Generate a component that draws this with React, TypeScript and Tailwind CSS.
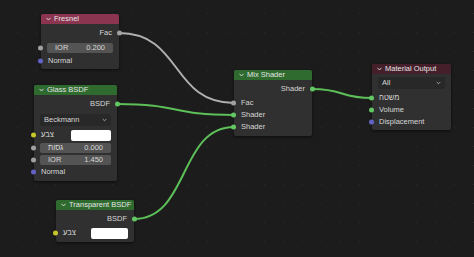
import { ReactNode } from "react";

type Side = "in" | "out";

const socketColor: Record<string, string> = {
  grey: "bg-[#a1a1a1]",
  green: "bg-[#63c763]",
  purple: "bg-[#6363c7]",
  yellow: "bg-[#c7c729]",
};

const Socket = ({ side, color }: { side: Side; color: string }) => (
  <span
    className={`absolute top-1/2 -translate-y-1/2 w-[5px] h-[5px] rounded-full ${socketColor[color]} ${
      side === "in" ? "-left-[3px]" : "-right-[3px]"
    }`}
  />
);

type NodeProps = {
  title: string;
  header: string;
  x: number;
  y: number;
  w: number;
  children: ReactNode;
};

// node boxes sit on a free canvas, so position comes from data
const Node = ({ title, header, x, y, w, children }: NodeProps) => (
  <div
    className="absolute bg-[#303030] rounded-[2px] shadow-[0_1px_3px_rgba(0,0,0,0.6)]"
    style={{ left: x, top: y, width: w }}
  >
    <div
      className={`h-[10px] flex items-center gap-[3px] pl-[5px] rounded-t-[2px] text-[7.5px] leading-none text-[#e4e4e4] ${header}`}
    >
      <svg width="5" height="4" viewBox="0 0 5 4">
        <path d="M0.5 0.8 L2.5 3 L4.5 0.8" stroke="#ddd" strokeWidth="0.9" fill="none" />
      </svg>
      <span>{title}</span>
    </div>
    <div className="relative">{children}</div>
  </div>
);

const Row = ({
  label,
  side,
  color,
  h = 12,
}: {
  label: string;
  side: Side;
  color: string;
  h?: number;
}) => (
  <div
    className={`relative flex items-center text-[7.5px] leading-none text-[#d6d6d6] ${
      side === "out" ? "justify-end pr-[7px]" : "pl-[7px]"
    }`}
    style={{ height: h }}
  >
    {label}
    <Socket side={side} color={color} />
  </div>
);

const Field = ({ label, value, h = 10, row = 12 }: { label: string; value: string; h?: number; row?: number }) => (
  <div className="relative flex items-center px-[6px]" style={{ height: row }}>
    <Socket side="in" color="grey" />
    <div
      className="flex-1 flex items-center justify-between bg-[#545454] rounded-[2px] px-[8px] text-[7.5px] leading-none text-[#d8d8d8]"
      style={{ height: h }}
    >
      <span>{label}</span>
      <span>{value}</span>
    </div>
  </div>
);

const ColorRow = ({ swatchW }: { swatchW: number }) => (
  <div className="relative flex items-center justify-between pl-[7px] pr-[6px] h-[12px] text-[7.5px] leading-none text-[#d6d6d6]">
    <Socket side="in" color="yellow" />
    <span>צבע</span>
    <span className="h-[11px] bg-white rounded-[2px]" style={{ width: swatchW }} />
  </div>
);

const Dropdown = ({ label }: { label: string }) => (
  <div className="px-[6px] h-[14px] flex items-center">
    <div className="flex-1 h-[12px] flex items-center justify-between bg-[#282828] rounded-[2px] px-[4px] text-[7.5px] leading-none text-[#d6d6d6]">
      <span>{label}</span>
      <svg width="5" height="4" viewBox="0 0 5 4">
        <path d="M0.7 1 L2.5 2.8 L4.3 1" stroke="#bbb" strokeWidth="0.8" fill="none" />
      </svg>
    </div>
  </div>
);

const wire = (x1: number, y1: number, x2: number, y2: number) => {
  const d = Math.max(30, (x2 - x1) * 0.55);
  return `M${x1} ${y1} C${x1 + d} ${y1}, ${x2 - d} ${y2}, ${x2} ${y2}`;
};

const wires = [
  { d: wire(119, 33, 234, 103), c: "#b0b0b0" },
  { d: wire(117, 104, 234, 115), c: "#5cbf58" },
  { d: wire(134, 219, 234, 127), c: "#5cbf58" },
  { d: wire(312, 89, 372, 98), c: "#5cbf58" },
];

export default function App() {
  return (
    <div
      className="relative w-[474px] h-[257px] overflow-hidden bg-[#1c1c1c] font-['Liberation_Sans','DejaVu_Sans',sans-serif]"
      style={{
        backgroundImage: "radial-gradient(circle, #2c2c2c 0.8px, transparent 1px)",
        backgroundSize: "19px 19px",
        backgroundPosition: "8px 4px",
      }}
    >
      <svg className="absolute inset-0" width="474" height="257">
        {wires.map((w, i) => (
          <path key={i} d={w.d} stroke={w.c} strokeWidth="2" fill="none" />
        ))}
      </svg>

      <Node title="Fresnel" header="bg-[#8b3550]" x={41} y={14} w={78}>
        <div className="pt-[3px] pb-[2px]">
          <Row label="Fac" side="out" color="grey" />
          <div className="h-[2px]" />
          <Field label="IOR" value="0.200" row={13} />
          <Row label="Normal" side="in" color="purple" h={13} />
        </div>
      </Node>

      <Node title="Glass BSDF" header="bg-[#2f6b2f]" x={34} y={85} w={83}>
        <div className="pt-[3px] pb-[3px]">
          <Row label="BSDF" side="out" color="green" />
          <div className="h-[3px]" />
          <Dropdown label="Beckmann" />
          <div className="h-[2px]" />
          <ColorRow swatchW={40} />
          <Field label="גסות" value="0.000" row={13} />
          <Field label="IOR" value="1.450" row={12} />
          <Row label="Normal" side="in" color="purple" />
        </div>
      </Node>

      <Node title="Transparent BSDF" header="bg-[#2f6b2f]" x={56} y={200} w={78}>
        <div className="pt-[3px] pb-[3px]">
          <Row label="BSDF" side="out" color="green" />
          <div className="h-[2px]" />
          <ColorRow swatchW={37} />
        </div>
      </Node>

      <Node title="Mix Shader" header="bg-[#2f6b2f]" x={234} y={70} w={78}>
        <div className="pt-[3px] pb-[3px]">
          <Row label="Shader" side="out" color="green" />
          <div className="h-[2px]" />
          <Row label="Fac" side="in" color="grey" />
          <Row label="Shader" side="in" color="green" />
          <Row label="Shader" side="in" color="green" />
        </div>
      </Node>

      <Node title="Material Output" header="bg-[#45202b]" x={372} y={64} w={79}>
        <div className="pt-[2px] pb-[2px]">
          <Dropdown label="All" />
          <div className="h-[2px]" />
          <Row label="משטח" side="in" color="green" />
          <Row label="Volume" side="in" color="green" />
          <Row label="Displacement" side="in" color="purple" />
        </div>
      </Node>
    </div>
  );
}
